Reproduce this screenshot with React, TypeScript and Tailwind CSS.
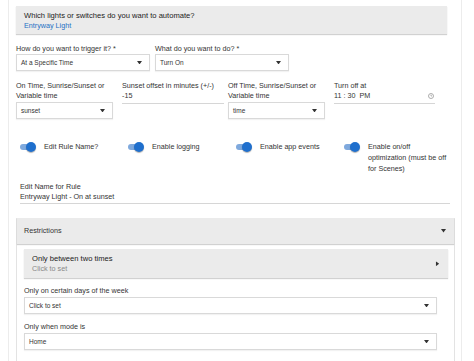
import React from 'react';

function Caret({ className = '' }: { className?: string }) {
  return (
    <svg width="5" height="3.5" viewBox="0 0 6 4" className={className}>
      <path d="M0 0 L6 0 L3 4 Z" fill="#333" />
    </svg>
  );
}

function Select({ value, className = '' }: { value: string; className?: string }) {
  return (
    <div
      className={`flex items-center justify-between h-[17px] border border-[#d9d9d9] bg-white px-[4px] text-[6.5px] text-[#333] shadow-[0_1px_1px_rgba(0,0,0,0.05)] ${className}`}
    >
      <span>{value}</span>
      <Caret className="mr-[3px]" />
    </div>
  );
}

function Toggle() {
  return (
    <div className="relative w-[16px] h-[10px] shrink-0">
      <div className="absolute left-0 top-[2px] w-[14px] h-[6px] rounded-full bg-[#7fa9dd]" />
      <div className="absolute right-0 top-0 w-[10px] h-[10px] rounded-full bg-[#1f6fcd] shadow-[0_1px_1px_rgba(0,0,0,0.3)]" />
    </div>
  );
}

const toggles = [
  'Edit Rule Name?',
  'Enable logging',
  'Enable app events',
  'Enable on/off optimization (must be off for Scenes)',
];

export default function App() {
  return (
    <div className="w-[474px] h-[361px] overflow-hidden bg-white text-[#333]" style={{ fontFamily: '"Liberation Sans", Arial, sans-serif' }}>
      <div className="ml-[8px] w-[454px] h-full border-x border-[#ececec] pl-[7px] pt-[6px]">
        {/* device picker */}
        <div className="w-[431px] h-[28px] bg-[#ebebeb] shadow-[0_1px_1px_rgba(0,0,0,0.18)] pl-[8px] pt-[5px] leading-[10px]">
          <div className="text-[7.6px] text-[#222]">Which lights or switches do you want to automate?</div>
          <div className="text-[7.2px] text-[#2470c4]">Entryway Light</div>
        </div>

        {/* trigger / action */}
        <div className="flex gap-[5px] mt-[10px]">
          <div className="w-[134px]">
            <div className="text-[7.2px] leading-[9px] mb-[1px]">How do you want to trigger it? *</div>
            <Select value="At a Specific Time" />
          </div>
          <div className="w-[134px]">
            <div className="text-[7.2px] leading-[9px] mb-[1px]">What do you want to do? *</div>
            <Select value="Turn On" />
          </div>
        </div>

        {/* times */}
        <div className="flex mt-[10px] text-[7.2px] leading-[10px]">
          <div className="w-[106px]">
            <div>On Time, Sunrise/Sunset or</div>
            <div>Variable time</div>
            <Select value="sunset" className="w-[97px] mt-[1px]" />
          </div>
          <div className="w-[106px]">
            <div>Sunset offset in minutes (+/-)</div>
            <div className="w-[102px] border-b border-[#d6d6d6] pb-[2px]">-15</div>
          </div>
          <div className="w-[106px]">
            <div>Off Time, Sunrise/Sunset or</div>
            <div>Variable time</div>
            <Select value="time" className="w-[97px] mt-[1px]" />
          </div>
          <div className="w-[106px]">
            <div>Turn off at</div>
            <div className="flex items-center justify-between w-[101px] border-b border-[#d6d6d6] pb-[2px]">
              <span className="whitespace-pre">11 : 30  PM</span>
              <svg width="6" height="6" viewBox="0 0 6 6" className="mr-[1px]">
                <circle cx="3" cy="3" r="2.5" fill="none" stroke="#999" strokeWidth="0.8" />
                <path d="M3 1.6 V3 H4" stroke="#999" strokeWidth="0.7" fill="none" />
              </svg>
            </div>
          </div>
        </div>

        {/* toggles */}
        <div className="flex mt-[22px] text-[7.2px] leading-[11px]">
          {toggles.map((t, i) => (
            <div key={i} className="w-[108px] flex items-start pl-[4px]">
              <div className="mt-[1px]">
                <Toggle />
              </div>
              <div className={`ml-[8px] ${i === 3 ? 'w-[90px]' : ''}`}>{t}</div>
            </div>
          ))}
        </div>

        {/* rule name */}
        <div className="mt-[8px] ml-[4px] w-[430px] text-[7.2px] leading-[10px]">
          <div>Edit Name for Rule</div>
          <div className="border-b border-[#d6d6d6] pb-[1px]">Entryway Light - On at sunset</div>
        </div>

        {/* restrictions */}
        <div className="mt-[14px] w-[439px] h-[200px] border-x border-[#e3e3e3]">
          <div className="flex items-center justify-between h-[26px] bg-[#ebebeb] shadow-[0_1px_1px_rgba(0,0,0,0.18)] pl-[7px] pr-[8px]">
            <span className="text-[7.2px]">Restrictions</span>
            <Caret />
          </div>
          <div className="pl-[7px] pt-[5px]">
            <div className="flex items-center justify-between w-[424px] h-[29px] bg-[#ebebeb] shadow-[0_1px_1px_rgba(0,0,0,0.18)] pl-[8px] pr-[8px] leading-[10px]">
              <div>
                <div className="text-[7.6px] text-[#222]">Only between two times</div>
                <div className="text-[7.2px] text-[#888]">Click to set</div>
              </div>
              <Caret className="-rotate-90" />
            </div>
            <div className="mt-[8px] text-[7.2px] leading-[10px]">Only on certain days of the week</div>
            <Select value="Click to set" className="w-[413px] h-[16px] mt-[1px]" />
            <div className="mt-[8px] text-[7.2px] leading-[10px]">Only when mode is</div>
            <Select value="Home" className="w-[413px] h-[16px] mt-[1px]" />
          </div>
        </div>
      </div>
    </div>
  );
}
